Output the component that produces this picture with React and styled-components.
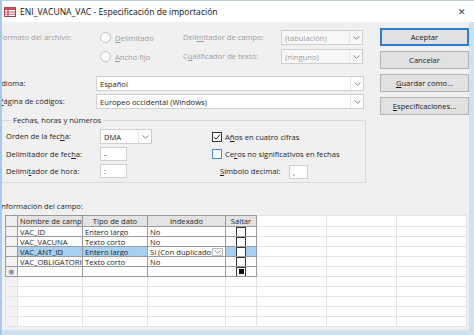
import React from 'react'
import styled, { createGlobalStyle } from 'styled-components'

const GlobalStyle = createGlobalStyle`
  html, body { margin: 0; padding: 0; background: #f0f0f0; }
  body {
    font-family: 'Open Sans', 'Noto Sans', sans-serif;
    font-size: 7.6px;
    color: #1e1e1e;
  }
  * { box-sizing: border-box; }
`

const fields = [
  { name: 'VAC_ID', type: 'Entero largo', index: 'No' },
  { name: 'VAC_VACUNA', type: 'Texto corto', index: 'No' },
  { name: 'VAC_ANT_ID', type: 'Entero largo', index: 'Sí (Con duplicados)', selected: true },
  { name: 'VAC_OBLIGATORIO', type: 'Texto corto', index: 'No' },
]

const extraCols = [0, 1, 2]
const emptyRows = [0, 1, 2, 3, 4]

function Chevron() {
  return (
    <svg width="7" height="4" viewBox="0 0 7 4">
      <path d="M0.5 0.5 L3.5 3.2 L6.5 0.5" fill="none" stroke="#7a7a7a" strokeWidth="0.9" />
    </svg>
  )
}

function Select({ value, disabled, width }) {
  return (
    <SelectBox $width={width} $disabled={disabled}>
      <span>{value}</span>
      <Arrow><Chevron /></Arrow>
    </SelectBox>
  )
}

export default function App() {
  return (
    <Window>
      <GlobalStyle />
      <TitleBar>
        <svg width="12" height="10" viewBox="0 0 12 10">
          <rect x="0.5" y="0.5" width="11" height="9" fill="#fff" stroke="#b03a4a" />
          <rect x="0.5" y="0.5" width="11" height="2.5" fill="#c8505e" />
          <line x1="4" y1="3" x2="4" y2="9.5" stroke="#b03a4a" />
          <line x1="1" y1="5" x2="11" y2="5" stroke="#b03a4a" strokeWidth="0.8" />
          <line x1="1" y1="7.2" x2="11" y2="7.2" stroke="#b03a4a" strokeWidth="0.8" />
        </svg>
        <Title>ENI_VACUNA_VAC - Especificación de importación</Title>
        <Close>✕</Close>
      </TitleBar>

      <Content>
        <Top>
          <Main>
            <Options>
              <Label $disabled>Formato del archivo:</Label>
              <RadioLabel><Radio /><span><u>D</u>elimitado</span></RadioLabel>
              <Label $disabled>Deli<u>m</u>itador de campo:</Label>
              <Select value="(tabulación)" disabled width={82} />

              <span />
              <RadioLabel><Radio /><span><u>A</u>ncho fijo</span></RadioLabel>
              <Label $disabled>C<u>u</u>alificador de texto:</Label>
              <Select value="(ninguno)" disabled width={82} />
            </Options>

            <Lang>
              <Label><u>I</u>dioma:</Label>
              <Select value="Español" width={268} />
              <Label><u>P</u>ágina de códigos:</Label>
              <Select value="Europeo occidental (Windows)" width={268} />
            </Lang>

            <Group>
              <legend>Fechas, horas y números</legend>
              <GroupGrid>
                <Label>Orden de la fec<u>h</u>a:</Label>
                <Select value="DMA" width={52} />
                <Check>
                  <CheckBox>
                    <svg width="8" height="8" viewBox="0 0 8 8">
                      <path d="M1 4.2 L3.1 6.2 L7 1.5" fill="none" stroke="#222" strokeWidth="1" />
                    </svg>
                  </CheckBox>
                  <span>A<u>ñ</u>os en cuatro cifras</span>
                </Check>

                <Label>Delimitador de fec<u>h</u>a:</Label>
                <TextInput>-</TextInput>
                <Check>
                  <CheckBox $focus />
                  <span>Ce<u>r</u>os no significativos en fechas</span>
                </Check>

                <Label>Delimi<u>t</u>ador de hora:</Label>
                <TextInput>:</TextInput>
                <Decimal>
                  <Label><u>S</u>ímbolo decimal:</Label>
                  <TextInput $width={19}>,</TextInput>
                </Decimal>
              </GroupGrid>
            </Group>
          </Main>

          <Side>
            <Button $default>Aceptar</Button>
            <Button>Cancelar</Button>
            <Button><span><u>G</u>uardar como...</span></Button>
            <Button><span><u>E</u>specificaciones...</span></Button>
          </Side>
        </Top>

        <FieldLabel><u>I</u>nformación del campo:</FieldLabel>

        <Sheet>
          <colgroup>
            <col style={{ width: 12 }} />
            <col style={{ width: 65 }} />
            <col style={{ width: 65 }} />
            <col style={{ width: 78 }} />
            <col style={{ width: 31 }} />
            <col style={{ width: 70 }} />
            <col style={{ width: 70 }} />
            <col />
          </colgroup>
          <thead>
            <tr>
              <Head $selector />
              <Head>Nombre de campo</Head>
              <Head>Tipo de dato</Head>
              <Head>Indexado</Head>
              <Head>Saltar</Head>
              {extraCols.map((c) => <Cell key={c} $head />)}
            </tr>
          </thead>
          <tbody>
            {fields.map((f) => (
              <tr key={f.name}>
                <Cell $defined $selector />
                <Cell $defined $selected={f.selected}>{f.name}</Cell>
                <Cell $defined $selected={f.selected}>{f.type}</Cell>
                {f.selected ? (
                  <Cell $defined>
                    <Combo>
                      <span>{f.index}</span>
                      <ComboArrow><Chevron /></ComboArrow>
                    </Combo>
                  </Cell>
                ) : (
                  <Cell $defined>{f.index}</Cell>
                )}
                <Cell $defined $selected={f.selected}><Skip /></Cell>
                {extraCols.map((c) => <Cell key={c} />)}
              </tr>
            ))}
            <tr>
              <Cell $defined $selector><NewMark>✱</NewMark></Cell>
              <Cell $defined />
              <Cell $defined />
              <Cell $defined />
              <Cell $defined><Skip $mixed /></Cell>
              {extraCols.map((c) => <Cell key={c} />)}
            </tr>
            {emptyRows.map((i) => (
              <tr key={i}>
                <Cell $selector />
                <Cell />
                <Cell />
                <Cell />
                <Cell />
                {extraCols.map((c) => <Cell key={c} />)}
              </tr>
            ))}
          </tbody>
        </Sheet>
      </Content>
    </Window>
  )
}

const Window = styled.div`
  width: 474px;
  height: 335px;
  overflow: hidden;
  background: #f0f0f0;
  border-top: 1px solid #b4d0ea;
  border-left: 2px solid #a9c9e8;
  display: flex;
  flex-direction: column;
`

const TitleBar = styled.div`
  height: 21px;
  flex: none;
  background: #ffffff;
  display: flex;
  align-items: center;
  padding-left: 2px;
  svg { flex: none; }
`

const Title = styled.div`
  margin-left: 4px;
  font-size: 8.6px;
  color: #111;
`

const Close = styled.div`
  margin-left: auto;
  margin-right: 8px;
  font-size: 9px;
  color: #333;
`

const Content = styled.div`
  flex: 1;
  padding-top: 6px;
  border-right: 5px solid #cfe2f3;
  border-bottom: 5px solid #cfe2f3;
  display: flex;
  flex-direction: column;
`

const Top = styled.div`
  flex: none;
  display: flex;
  align-items: flex-start;
`

const Main = styled.div`
  width: 367px;
  margin-left: -3px;
  display: flex;
  flex-direction: column;
`

const Side = styled.div`
  margin-left: 14px;
  width: 89px;
  display: flex;
  flex-direction: column;
  gap: 5px;
`

const Button = styled.div`
  height: 18px;
  display: flex;
  align-items: center;
  justify-content: center;
  background: #e1e1e1;
  border: 1px solid ${(p) => (p.$default ? '#2a7fd4' : '#b4b4b4')};
  box-shadow: ${(p) => (p.$default ? 'inset 0 0 0 1px #2a7fd4' : 'none')};
  color: #1a1a1a;
`

const Label = styled.div`
  line-height: 15px;
  white-space: nowrap;
  color: ${(p) => (p.$disabled ? '#9d9d9d' : '#1e1e1e')};
`

const Options = styled.div`
  margin-top: 2px;
  display: grid;
  grid-template-columns: 101px 83px 98px 82px;
  grid-auto-rows: 15px;
  row-gap: 4px;
`

const RadioLabel = styled.div`
  display: flex;
  align-items: center;
  gap: 4px;
  color: #9d9d9d;
  white-space: nowrap;
`

const Radio = styled.span`
  width: 11px;
  height: 11px;
  flex: none;
  border-radius: 50%;
  border: 1px solid #c4c4c4;
  background: #fafafa;
`

const SelectBox = styled.div`
  width: ${(p) => p.$width}px;
  height: 15px;
  display: flex;
  align-items: center;
  background: ${(p) => (p.$disabled ? '#f7f7f7' : '#ffffff')};
  border: 1px solid #cfcfcf;
  color: ${(p) => (p.$disabled ? '#9d9d9d' : '#1e1e1e')};
  span {
    flex: 1;
    padding-left: 3px;
    white-space: nowrap;
    overflow: hidden;
  }
`

const Arrow = styled.div`
  width: 13px;
  height: 100%;
  display: flex;
  align-items: center;
  justify-content: center;
  border-left: 1px solid #e4e4e4;
`

const Lang = styled.div`
  margin-top: 12px;
  display: grid;
  grid-template-columns: 97px 268px;
  grid-auto-rows: 15px;
  row-gap: 3px;
`

const Group = styled.fieldset`
  margin: 5px 0 0 0;
  width: 367px;
  padding: 0 0 3px 6px;
  border: 1px solid #d9d9d9;
  legend {
    margin-left: 5px;
    padding: 0 2px;
    line-height: 12px;
    color: #1e1e1e;
  }
`

const GroupGrid = styled.div`
  margin-top: 3px;
  display: grid;
  grid-template-columns: 94px 112px 1fr;
  grid-auto-rows: 15px;
  row-gap: 2.5px;
`

const TextInput = styled.div`
  width: ${(p) => p.$width || 27}px;
  height: 14px;
  flex: none;
  background: #ffffff;
  border: 1px solid #cfcfcf;
  padding-left: 3px;
  line-height: 12px;
`

const Check = styled.div`
  display: flex;
  align-items: center;
  gap: 3px;
  white-space: nowrap;
`

const CheckBox = styled.span`
  width: 10px;
  height: 10px;
  flex: none;
  display: flex;
  align-items: center;
  justify-content: center;
  background: #ffffff;
  border: 1px solid ${(p) => (p.$focus ? '#3d8fd6' : '#333333')};
`

const Decimal = styled.div`
  display: flex;
  align-items: center;
  padding-left: 8px;
  div:first-child { width: 69px; }
`

const FieldLabel = styled.div`
  flex: none;
  margin: 17px 0 3px -3px;
  line-height: 12px;
`

const Sheet = styled.table`
  flex: none;
  margin-left: 3px;
  width: 462px;
  border-collapse: collapse;
  table-layout: fixed;
  background: #ffffff;
  border-top: 1px solid #8e8e8e;
  border-left: 1px solid #a0a0a0;
  td, th { height: 10px; }
  thead th, thead td { height: 11px; }
`

const Head = styled.th`
  padding: 0 2px;
  font-weight: normal;
  text-align: center;
  white-space: nowrap;
  overflow: hidden;
  line-height: 9px;
  background: ${(p) => (p.$selector ? '#eeeeee' : '#e3e3e3')};
  border: 1px solid #9a9a9a;
`

const Cell = styled.td`
  padding: 0 2px;
  white-space: nowrap;
  overflow: hidden;
  line-height: 8px;
  vertical-align: middle;
  border: 1px solid ${(p) => (p.$defined ? '#9a9a9a' : '#e4e4e4')};
  background: ${(p) => (p.$selected ? '#a6d0f2' : p.$selector ? '#f2f2f2' : '#ffffff')};
`

const Combo = styled.div`
  display: flex;
  align-items: center;
  span { flex: 1; overflow: hidden; white-space: nowrap; }
`

const ComboArrow = styled.div`
  width: 11px;
  height: 8px;
  flex: none;
  display: flex;
  align-items: center;
  justify-content: center;
  border: 1px solid #bdbdbd;
`

const Skip = styled.div`
  width: 10px;
  height: 10px;
  margin: -1px auto;
  background: #ffffff;
  border: 1px solid #3a3a3a;
  display: flex;
  align-items: center;
  justify-content: center;
  &::after {
    content: '';
    display: ${(p) => (p.$mixed ? 'block' : 'none')};
    width: 5px;
    height: 5px;
    background: #111;
  }
`

const NewMark = styled.div`
  text-align: center;
  font-size: 8px;
  line-height: 8px;
  color: #8094a8;
`
